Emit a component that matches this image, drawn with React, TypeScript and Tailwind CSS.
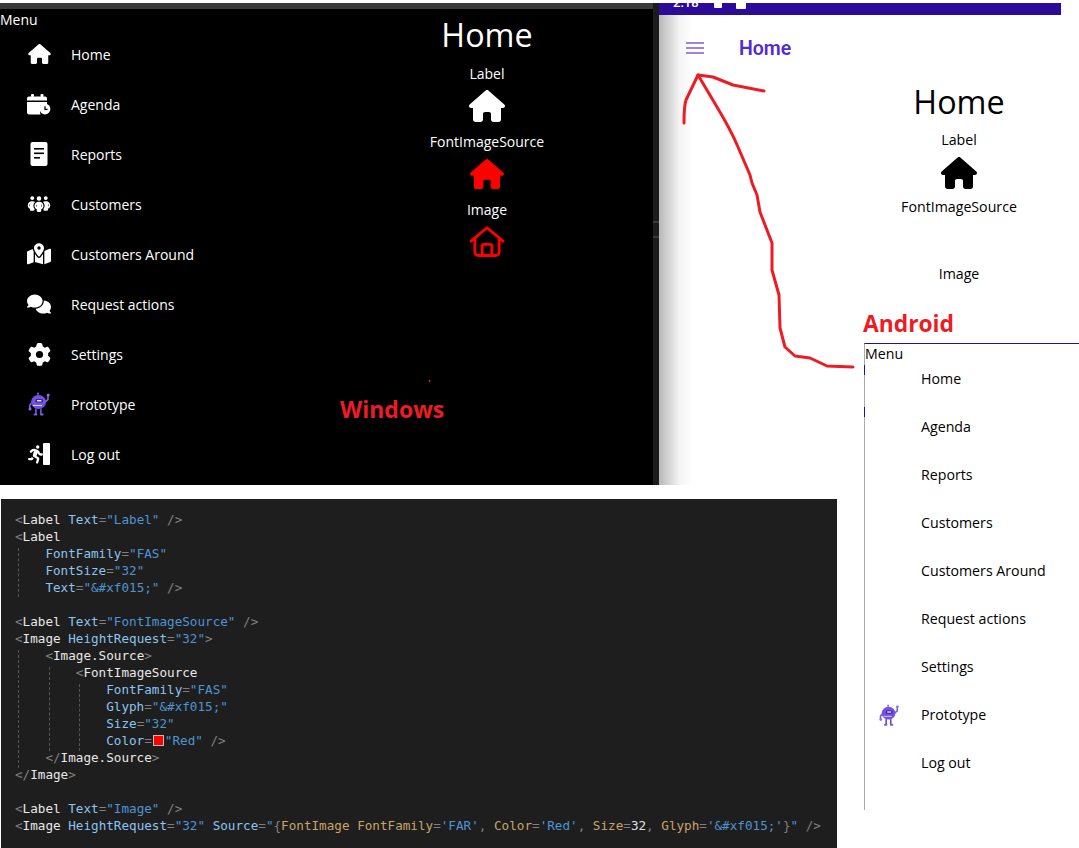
import React from "react";
import { FaHouse, FaPeopleGroup, FaMapLocationDot, FaComments, FaGear, FaPersonRunning } from "react-icons/fa6";

const menuItems = ["Home", "Agenda", "Reports", "Customers", "Customers Around", "Request actions", "Settings", "Prototype", "Log out"];

function Bot({ className }: { className?: string }) {
  return (
    <svg viewBox="0 0 24 24" className={className}>
      <circle cx="11" cy="1.6" r="1" fill="#8c6cf0" />
      <rect x="10.6" y="2" width="0.9" height="3" fill="#7c5ce0" />
      <ellipse cx="11.5" cy="10" rx="7.5" ry="7" fill="#7252e0" />
      <rect x="8.5" y="7" width="7.5" height="3.6" rx="1.4" fill="#3a2490" />
      <rect x="10" y="8" width="4.4" height="1.5" fill="#e4deff" />
      <rect x="6" y="13" width="9" height="0.9" fill="#e4deff" />
      <path d="M18 10 L21 7.5 L21 3.5" stroke="#7c5ce0" strokeWidth="1.7" fill="none" />
      <circle cx="21.2" cy="3" r="1.5" fill="#8c6cf0" />
      <path d="M4 11 L2.6 14 L3 16.5" stroke="#7c5ce0" strokeWidth="1.7" fill="none" />
      <circle cx="3" cy="17" r="1.5" fill="#8c6cf0" />
      <rect x="8" y="16.5" width="1.8" height="5.5" fill="#6a4bd6" />
      <rect x="13" y="16.5" width="1.8" height="5.5" fill="#6a4bd6" />
      <rect x="6.6" y="21.6" width="3.6" height="2" rx="0.8" fill="#7c5ce0" />
      <rect x="13" y="21.6" width="3.6" height="2" rx="0.8" fill="#7c5ce0" />
    </svg>
  );
}

function CalendarClock() {
  return (
    <svg viewBox="0 0 24 21" className="w-[24px] h-[21px]">
      <rect x="4" y="0" width="3" height="3" rx="1" fill="#fff" />
      <rect x="13.5" y="0" width="3" height="3" rx="1" fill="#fff" />
      <path d="M0 4.5a2 2 0 0 1 2-2h16a2 2 0 0 1 2 2V6.5H0z" fill="#fff" />
      <path d="M0 8h20v3.2a7 7 0 0 0-6.5 9.3H2a2 2 0 0 1-2-2z" fill="#fff" />
      <circle cx="18" cy="15" r="5.4" fill="#fff" />
      <path d="M18 12.2V15.4H20.6" stroke="#000" strokeWidth="1.3" fill="none" />
    </svg>
  );
}

function ReportIcon() {
  return (
    <svg viewBox="0 0 18 24" className="w-[18px] h-[24px]">
      <rect width="17" height="24" x="0.5" rx="2" fill="#fff" />
      <rect x="4" y="6" width="10" height="1.6" fill="#000" />
      <rect x="4" y="10.5" width="10" height="1.6" fill="#000" />
      <rect x="4" y="15" width="6" height="1.6" fill="#000" />
    </svg>
  );
}

function LogoutIcon() {
  return (
    <div className="flex items-center">
      <FaPersonRunning className="w-[16px] h-[23px] text-white" />
      <div className="w-[7px] h-[22px] bg-white rounded-[1px] -ml-[1px]" />
    </div>
  );
}

const cn = "w-[23px] h-[20px] text-white";
const windowsIcons: React.ReactNode[] = [
  <FaHouse className={cn} />,
  <CalendarClock />,
  <ReportIcon />,
  <FaPeopleGroup className="w-[24px] h-[18px] text-white" />,
  <FaMapLocationDot className="w-[24px] h-[22px] text-white" />,
  <FaComments className="w-[24px] h-[22px] text-white" />,
  <FaGear className="w-[23px] h-[23px] text-white" />,
  <Bot className="w-[24px] h-[24px]" />,
  <LogoutIcon />,
];

function OutlineHouse() {
  return (
    <svg viewBox="0 0 36 32" className="w-[36px] h-[31px]" fill="none" stroke="#ff0000" strokeWidth="3" strokeLinejoin="round" strokeLinecap="round">
      <path d="M1.5 15.5 L18 1.8 L34.5 15.5" />
      <path d="M5.5 13 V27 a3.5 3.5 0 0 0 3.5 3.5 H27 a3.5 3.5 0 0 0 3.5 -3.5 V13" />
      <path d="M13 30 V20.5 a1.5 1.5 0 0 1 1.5 -1.5 h7 a1.5 1.5 0 0 1 1.5 1.5 V30" />
    </svg>
  );
}

const B = ({ children }: { children: React.ReactNode }) => <span className="text-[#808080]">{children}</span>;
const T = ({ children }: { children: React.ReactNode }) => <span className="text-[#e8e8e8]">{children}</span>;
const A = ({ children }: { children: React.ReactNode }) => <span className="text-[#8cc4f0]">{children}</span>;
const V = ({ children }: { children: React.ReactNode }) => <span className="text-[#4f94d4]">{children}</span>;
const G = ({ children }: { children: React.ReactNode }) => <span className="text-[#c8a468]">{children}</span>;
const Eq = () => <span className="text-[#808080]">=</span>;

function Line({ indent = 0, children }: { indent?: number; children?: React.ReactNode }) {
  return (
    <div className="h-[17px] whitespace-pre">
      {" ".repeat(indent)}
      {children}
    </div>
  );
}

function CodePanel() {
  return (
    <div className="relative ml-[1px] w-[836px] h-[349px] mt-[14px] bg-[#1e1e1e] pt-[12px] pl-[14px] font-['DejaVu_Sans_Mono',monospace] text-[12.64px] leading-[17px]">
      <div className="absolute left-[17px] top-[49px] h-[49px] border-l border-dashed border-[#555]" />
      <div className="absolute left-[17px] top-[151px] h-[118px] border-l border-dashed border-[#555]" />
      <div className="absolute left-[48px] top-[168px] h-[84px] border-l border-dashed border-[#555]" />
      <div className="absolute left-[78px] top-[185px] h-[67px] border-l border-dashed border-[#555]" />
      <Line><B>&lt;</B><T>Label</T> <A>Text</A><Eq /><V>"Label"</V> <B>/&gt;</B></Line>
      <Line><B>&lt;</B><T>Label</T></Line>
      <Line indent={4}><A>FontFamily</A><Eq /><V>"FAS"</V></Line>
      <Line indent={4}><A>FontSize</A><Eq /><V>"32"</V></Line>
      <Line indent={4}><A>Text</A><Eq /><V>"&amp;#xf015;"</V> <B>/&gt;</B></Line>
      <Line />
      <Line><B>&lt;</B><T>Label</T> <A>Text</A><Eq /><V>"FontImageSource"</V> <B>/&gt;</B></Line>
      <Line><B>&lt;</B><T>Image</T> <A>HeightRequest</A><Eq /><V>"32"</V><B>&gt;</B></Line>
      <Line indent={4}><B>&lt;</B><T>Image.Source</T><B>&gt;</B></Line>
      <Line indent={8}><B>&lt;</B><T>FontImageSource</T></Line>
      <Line indent={12}><A>FontFamily</A><Eq /><V>"FAS"</V></Line>
      <Line indent={12}><A>Glyph</A><Eq /><V>"&amp;#xf015;"</V></Line>
      <Line indent={12}><A>Size</A><Eq /><V>"32"</V></Line>
      <Line indent={12}>
        <A>Color</A><Eq />
        <span className="inline-block w-[9px] h-[9px] bg-[#ff0000] border border-[#bbb] mx-[1px] align-[-1px] box-content" />
        <V>"Red"</V> <B>/&gt;</B>
      </Line>
      <Line indent={4}><B>&lt;/</B><T>Image.Source</T><B>&gt;</B></Line>
      <Line><B>&lt;/</B><T>Image</T><B>&gt;</B></Line>
      <Line />
      <Line><B>&lt;</B><T>Label</T> <A>Text</A><Eq /><V>"Image"</V> <B>/&gt;</B></Line>
      <Line>
        <B>&lt;</B><T>Image</T> <A>HeightRequest</A><Eq /><V>"32"</V> <A>Source</A><Eq /><V>"</V><B>{"{"}</B><G>FontImage</G> <G>FontFamily</G><Eq /><V>'FAR'</V><B>,</B> <G>Color</G><Eq /><V>'Red'</V><B>,</B> <G>Size</G><Eq /><span className="text-[#e0e0e0]">32</span><B>,</B> <G>Glyph</G><Eq /><V>'&amp;#xf015;'</V><B>{"}"}</B><V>"</V> <B>/&gt;</B>
      </Line>
    </div>
  );
}

function WindowsPanel() {
  return (
    <div className="w-[653px] h-[482px] mt-[3px] flex flex-col bg-black text-white">
      <div className="h-[6px] bg-[#3a3a3a]" />
      <div className="flex flex-1">
        <div className="w-[321px]">
          <div className="h-[20px] leading-[21px] text-[14px]">Menu</div>
          {menuItems.map((m, i) => (
            <div key={m} className="h-[50px] flex items-center text-[14px]">
              <div className="ml-[27px] w-[24px] mr-[20px] flex justify-center shrink-0">{windowsIcons[i]}</div>
              <span>{m}</span>
            </div>
          ))}
        </div>
        <div className="w-[332px] flex flex-col items-center text-[14px]">
          <div className="text-[32.3px] leading-[44px] mt-[3px]">Home</div>
          <div className="leading-[19px] mt-[8px]">Label</div>
          <FaHouse className="w-[36px] h-[32px] mt-[7px]" />
          <div className="leading-[19px] mt-[10px]">FontImageSource</div>
          <FaHouse className="w-[34px] h-[30px] mt-[8px] text-[#ff0000]" />
          <div className="leading-[19px] mt-[11px]">Image</div>
          <div className="mt-[7px]"><OutlineHouse /></div>
          <div className="self-start ml-[19px] mt-[136px] text-[#ed1c24] font-bold text-[23px] leading-[32px]">Windows</div>
        </div>
      </div>
    </div>
  );
}

function Divider() {
  return (
    <div className="w-[6px] h-[482px] mt-[3px] bg-[#1c1c1c] flex flex-col">
      <div className="h-[218px]" />
      <div className="h-[2px] bg-[#3a3a3a]" />
      <div className="h-[13px]" />
      <div className="h-[2px] bg-[#3a3a3a]" />
    </div>
  );
}

function AndroidLeft() {
  return (
    <div className="w-[205px] h-[485px] flex flex-col">
      <div className="mt-[3px] h-[12px] bg-[#2b0b98] overflow-hidden flex items-start pl-[14px] text-white text-[13px] font-['Roboto',sans-serif]">
        <span className="leading-[15px] -mt-[8px] font-medium w-[41px]">2:18</span>
        <div className="w-[8px] h-[5px] bg-white rounded-b-[1px]" />
        <div className="w-[10px] h-[6px] bg-white rounded-b-[1px] ml-[14px]" />
      </div>
      <div className="flex-1 bg-gradient-to-r from-[#b8b8b8] via-[#f4f4f4] via-[10%] to-white to-[16%] flex flex-col">
        <div className="h-[66px] flex items-center pl-[27px] gap-[35px]">
          <div className="w-[18px] flex flex-col gap-[3px]">
            <div className="h-[2px] bg-[#9d83e8]" />
            <div className="h-[2px] bg-[#9d83e8]" />
            <div className="h-[2px] bg-[#9d83e8]" />
          </div>
          <span className="text-[#512bd4] font-['Roboto',sans-serif] font-semibold text-[19.5px] mt-[2px]">Home</span>
        </div>
      </div>
    </div>
  );
}

function AndroidRight() {
  return (
    <div className="w-[215px] flex flex-col">
      <div className="mt-[3px] h-[12px] w-[197px] bg-[#2b0b98]" />
      <div className="w-[190px] flex flex-col items-center text-black text-[14.2px]">
        <div className="text-[32.3px] leading-[44px] mt-[64px]">Home</div>
        <div className="leading-[19px] mt-[7px]">Label</div>
        <FaHouse className="w-[36px] h-[32px] mt-[7.5px]" />
        <div className="leading-[19px] mt-[8.5px]">FontImageSource</div>
        <div className="leading-[19px] mt-[48px]">Image</div>
      </div>
      <div className="mt-[25px] h-[35px] leading-[32px] -ml-[1px] text-[#ed1c24] font-bold text-[22.8px]">Android</div>
      <div className="relative h-[467px] border-t border-t-[#2b0b98] border-l border-l-[#aaaaaa]">
        <div className="absolute -left-px top-[21px] w-px h-[10px] bg-[#2b0b98]" />
        <div className="absolute -left-px top-[63px] w-px h-[10px] bg-[#2b0b98]" />
        <div className="h-[11px] leading-[20px] text-[14.2px] text-black">Menu</div>
        {menuItems.map((m) => (
          <div key={m} className="h-[48px] flex items-center text-[14.2px] text-black">
            <div className="w-[56px] shrink-0 flex justify-center pl-[2px] pr-[10px]">
              {m === "Prototype" ? <Bot className="w-[22px] h-[24px]" /> : null}
            </div>
            <span>{m}</span>
          </div>
        ))}
      </div>
    </div>
  );
}

export default function App() {
  return (
    <div className="relative w-[1079px] h-[848px] bg-white overflow-hidden flex font-['Open_Sans',sans-serif]">
      <div className="w-[864px] flex flex-col">
        <div className="flex h-[485px]">
          <WindowsPanel />
          <Divider />
          <AndroidLeft />
        </div>
        <CodePanel />
      </div>
      <AndroidRight />
      <svg className="absolute inset-0 pointer-events-none" width="1079" height="848" fill="none" stroke="#ed1c24" strokeWidth="3" strokeLinejoin="round" strokeLinecap="round">
        <path d="M684 123 C684 112 684 106 686 100 L698 75 L713 77 L733 85 L764 91" />
        <path d="M698 75 L717 107 C726 122 733 135 738 147 L750 175 L752 183 L757 195 L760 212 L772 243 L772 270 L779 295 L780 328 L785 347 L795 356 L810 358 L827 366 L853 367" />
        <circle cx="429.5" cy="381" r="1" fill="#ed1c24" stroke="none" />
      </svg>
    </div>
  );
}
